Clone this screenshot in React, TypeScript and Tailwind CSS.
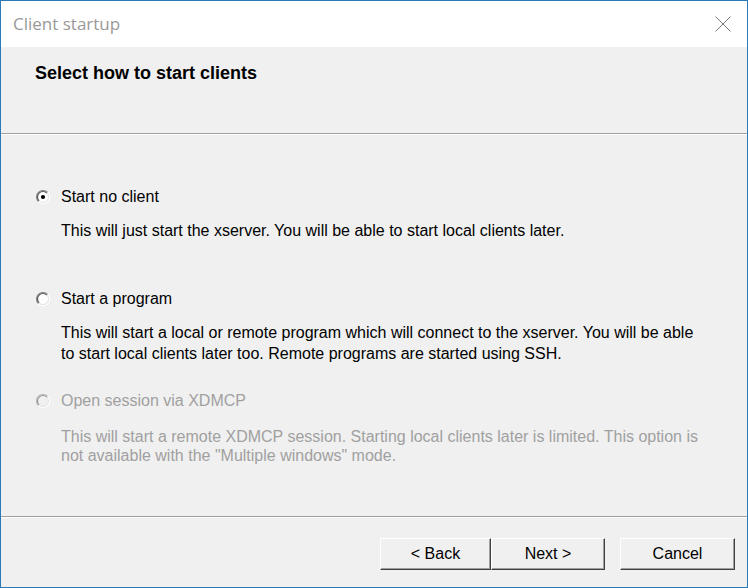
import { useState } from 'react';

const FONT = { fontFamily: '"Liberation Sans", Arial, sans-serif' };

type Opt = { id: string; label: string; desc: string[]; disabled?: boolean };

const OPTIONS: Opt[] = [
  {
    id: 'none',
    label: 'Start no client',
    desc: ['This will just start the xserver. You will be able to start local clients later.'],
  },
  {
    id: 'program',
    label: 'Start a program',
    desc: [
      'This will start a local or remote program which will connect to the xserver. You will be able',
      'to start local clients later too. Remote programs are started using SSH.',
    ],
  },
  {
    id: 'xdmcp',
    label: 'Open session via XDMCP',
    desc: [
      'This will start a remote XDMCP session. Starting local clients later is limited. This option is',
      'not available with the "Multiple windows" mode.',
    ],
    disabled: true,
  },
];

function Radio({ checked, disabled }: { checked: boolean; disabled?: boolean }) {
  return (
    <svg width="14" height="14" viewBox="0 0 14 14" className="shrink-0">
      <circle cx="7" cy="7" r="5.5" fill={disabled ? '#f0f0f0' : '#ffffff'} />
      {/* outer ring: grey top-left, white bottom-right */}
      <path d="M11.6 2.4 A6.5 6.5 0 0 0 2.4 11.6" fill="none" stroke={disabled ? '#b8b8b8' : '#8c8c8c'} strokeWidth="1.2" />
      <path d="M2.4 11.6 A6.5 6.5 0 0 0 11.6 2.4" fill="none" stroke="#ffffff" strokeWidth="1.2" />
      {/* inner ring: dark top-left, light bottom-right */}
      <path d="M10.9 3.1 A5.5 5.5 0 0 0 3.1 10.9" fill="none" stroke={disabled ? '#9a9a9a' : '#555555'} strokeWidth="1.2" />
      <path d="M3.1 10.9 A5.5 5.5 0 0 0 10.9 3.1" fill="none" stroke="#e3e3e3" strokeWidth="1" />
      {checked && <circle cx="7" cy="7" r="2.1" fill="#000" />}
    </svg>
  );
}

function Button({ w, children }: { w: string; children: React.ReactNode }) {
  return (
    <button
      className={`${w} h-[32px] bg-[#f0f0f0] border border-t-white border-l-white border-b-[#404040] border-r-[#404040] shadow-[inset_-1px_-1px_0_#a0a0a0] text-[16px] text-black`}
      style={FONT}
    >
      {children}
    </button>
  );
}

export default function App() {
  const [selected, setSelected] = useState('none');

  return (
    <div className="w-[748px] h-[588px] border border-[#2a7ab9] bg-[#f0f0f0] flex flex-col overflow-hidden">
      {/* Title bar */}
      <div className="h-[46px] bg-white flex items-center justify-between shrink-0">
        <span className="ml-[12px] text-[17px] text-[#999999]" style={{ fontFamily: '"Open Sans", "Noto Sans", sans-serif' }}>
          Client startup
        </span>
        <svg width="16" height="16" viewBox="0 0 16 16" className="mr-[16px]">
          <path d="M0.5 0.5 L15.5 15.5 M15.5 0.5 L0.5 15.5" stroke="#7a7a7a" strokeWidth="1" />
        </svg>
      </div>

      {/* Header */}
      <div className="h-[86px] shrink-0 pl-[34px] pt-[13px]">
        <div className="text-[18px] font-bold text-black" style={FONT}>
          Select how to start clients
        </div>
      </div>
      <div className="h-px bg-[#a0a0a0] shrink-0" />
      <div className="h-px bg-white shrink-0" />

      {/* Options */}
      <div className="flex-1 pt-[52px] pl-[35px] text-[16px]" style={FONT}>
        {OPTIONS.map((o) => (
          <div key={o.id} className="h-[102px]">
            <label
              className={`flex items-center gap-[11px] h-[20px] ${o.disabled ? 'text-[#a0a0a0]' : 'text-black'}`}
              onClick={() => !o.disabled && setSelected(o.id)}
            >
              <Radio checked={selected === o.id} disabled={o.disabled} />
              <span>{o.label}</span>
            </label>
            <div
              className={`pl-[25px] ${
                o.disabled ? 'text-[#a0a0a0] mt-[16px] leading-[19px]' : 'text-black mt-[13px] leading-[21px]'
              }`}
            >
              {o.desc.map((d) => (
                <div key={d}>{d}</div>
              ))}
            </div>
          </div>
        ))}
      </div>

      <div className="h-px bg-[#a0a0a0] shrink-0" />
      <div className="h-px bg-white shrink-0" />

      {/* Footer */}
      <div className="h-[69px] shrink-0 flex items-start pt-[20px] pl-[379px]">
        <Button w="w-[111px]">&lt; Back</Button>
        <Button w="w-[114px]">Next &gt;</Button>
        <div className="w-[15px]" />
        <Button w="w-[115px]">Cancel</Button>
      </div>
    </div>
  );
}
